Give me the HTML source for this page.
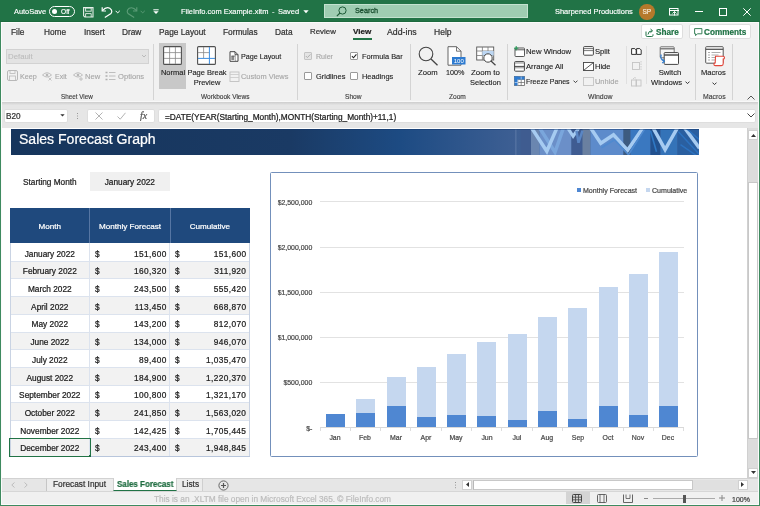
<!DOCTYPE html>
<html><head><meta charset="utf-8">
<style>
*{box-sizing:border-box;margin:0;padding:0}
html,body{width:760px;height:506px;overflow:hidden;background:#fff;-webkit-font-smoothing:antialiased;font-family:"Liberation Sans",sans-serif;color:#262626}
.a{position:absolute;white-space:nowrap;will-change:transform;-webkit-text-stroke-width:0.22px}
#title{position:absolute;left:0;top:0;width:760px;height:22px;background:#217346}
#ribbon{position:absolute;left:1px;top:22px;width:758px;height:80px;background:#f1f1f1}
#fbar{position:absolute;left:1px;top:102px;width:758px;height:26px;background:#e6e6e6}
#sheet{position:absolute;left:1px;top:128px;width:746px;height:350px;background:#fff}
.t{font-size:8.3px;color:#333;line-height:10px}
.w{color:#fff;-webkit-text-stroke:0.15px #fff}
.sep{position:absolute;width:1px;background:#d4d4d4}
.a.gl{font-size:7.2px;color:#3a3a3a;line-height:9px;-webkit-text-stroke-width:0.12px}
.a.rb{font-size:7.8px;color:#222;line-height:10px;-webkit-text-stroke-width:0.12px}
.a.dis{color:#a6a6a6}
</style></head><body>
<!-- TITLE BAR -->
<div id="title"></div>
<div id="ribbon"></div>
<div id="fbar"></div>
<div id="sheet"></div>
<div class="a t w" style="left:14px;top:7px;font-size:7.4px">AutoSave</div>
<div class="a" style="left:49px;top:6px;width:25.5px;height:11px;border:1.3px solid #fff;border-radius:5.5px"></div>
<div class="a" style="left:52px;top:9px;width:5px;height:5px;background:#fff;border-radius:50%"></div>
<div class="a w" style="left:61px;top:7px;font-size:6.6px;line-height:9px">Off</div>

<div class="a w" style="left:181px;top:7px;font-size:7.46px;line-height:10px">FileInfo.com Example.xltm</div>
<div class="a w" style="left:272.2px;top:7px;font-size:7.46px;line-height:10px">-</div>
<div class="a w" style="left:278.1px;top:7px;font-size:7.46px;line-height:10px">Saved</div>

<div class="a" style="left:324px;top:4px;width:203.5px;height:14px;background:#9fcdb2;border:1px solid #c3e2cf"></div>
<div class="a" style="left:355.2px;top:6.3px;font-size:7.3px;line-height:10px;color:#1a4f30;-webkit-text-stroke-width:0.3px">Search</div>

<div class="a w" style="left:554.5px;top:7px;font-size:7.45px;line-height:10px;-webkit-text-stroke:0.15px #fff">Sharpened Productions</div>
<div class="a" style="left:638.6px;top:3.8px;width:15.5px;height:15.5px;border-radius:50%;background:#b5792b"></div>
<div class="a" style="left:638.6px;top:7.5px;font-size:6.5px;line-height:8px;width:15.5px;text-align:center;color:#f3e6d0">SP</div>


<svg class="a" style="left:83px;top:7px" width="11" height="11"><path d="M0.6 0.6h9.4v9.4h-8.2l-1.2-1.2z" fill="none" stroke="#e6efe9" stroke-width="1.1"/><rect x="2.6" y="1" width="5.6" height="3.2" fill="none" stroke="#e6efe9" stroke-width="0.9"/><path d="M2.6 10v-3.4h5.6v3.4" fill="none" stroke="#e6efe9" stroke-width="0.9"/></svg>
<svg class="a" style="left:101px;top:6px" width="12" height="12"><path d="M1.2 1.2 V5 H5" fill="none" stroke="#fff" stroke-width="1.2"/><path d="M1.5 4.6 Q5 0.5 8.8 2.2 Q12 4.5 10 7.5 L3.8 11.5" fill="none" stroke="#fff" stroke-width="1.2"/></svg>
<svg class="a" style="left:115px;top:9.5px" width="6" height="4"><path d="M0.6 0.8 L2.7 2.9 L4.8 0.8" stroke="#fff" fill="none" stroke-width="1"/></svg>
<svg class="a" style="left:126px;top:6px" width="12" height="12"><path d="M10.8 1.2 V5 H7" fill="none" stroke="#5d9d78" stroke-width="1.1"/><path d="M10.5 4.6 Q7 0.5 3.2 2.2 Q0 4.5 2 7.5 L8.2 11.5" fill="none" stroke="#5d9d78" stroke-width="1.1"/></svg>
<svg class="a" style="left:139.5px;top:9.5px" width="6" height="4"><path d="M0.6 0.8 L2.7 2.9 L4.8 0.8" stroke="#5d9d78" fill="none" stroke-width="0.9"/></svg>
<svg class="a" style="left:153px;top:9px" width="6" height="6"><path d="M0.3 0.8h5.4" stroke="#fff" stroke-width="1"/><path d="M0.3 2.3 L3 5 L5.7 2.3z" fill="#fff"/></svg>
<svg class="a" style="left:302.5px;top:9.5px" width="6" height="4"><path d="M0.3 0.3 L3 3.2 L5.7 0.3z" fill="#fff"/></svg>
<svg class="a" style="left:336px;top:6px" width="11" height="11"><circle cx="6.5" cy="4.5" r="3.6" fill="none" stroke="#1d5a37" stroke-width="1"/><path d="M4 7 L0.8 10.2" stroke="#1d5a37" stroke-width="1.1"/></svg>
<svg class="a" style="left:669px;top:8px" width="9.5" height="7.5"><rect x="0.5" y="0.5" width="8.5" height="6.5" fill="none" stroke="#fff" stroke-width="1"/><path d="M0.5 2.5h10" stroke="#fff" stroke-width="1"/><path d="M5.5 3.5v4M3.5 5.5 L5.5 3.5 L7.5 5.5" stroke="#fff" fill="none" stroke-width="0.9"/></svg>
<div class="a" style="left:694.5px;top:11px;width:7.5px;height:1px;background:#fff"></div>
<div class="a" style="left:719px;top:7.5px;width:7.5px;height:7.5px;border:1px solid #fff"></div>
<svg class="a" style="left:743px;top:7.5px" width="8" height="8"><path d="M0.3 0.3 L7.7 7.7 M7.7 0.3 L0.3 7.7" stroke="#fff" stroke-width="1"/></svg>

<!-- Share / Comments -->
<div class="a" style="left:641.3px;top:24.4px;width:41.7px;height:15.1px;background:#fff;border:1px solid #dedede;border-radius:2px"></div>
<svg class="a" style="left:645.3px;top:27.5px" width="9" height="9"><path d="M1 3.5v3.8q0 1.2 1.2 1.2h4.6q1.2 0 1.2-1.2v-1" fill="none" stroke="#217346" stroke-width="1"/><path d="M3 6.5 Q3.2 3 7 2.8 M5.5 1 L7.6 2.8 L5.5 4.6" fill="none" stroke="#217346" stroke-width="1"/></svg>
<div class="a" style="left:656px;top:27.5px;font-size:8.2px;line-height:10px;font-weight:bold;color:#217346">Share</div>
<div class="a" style="left:689px;top:24.4px;width:62px;height:15.1px;background:#fff;border:1px solid #dedede;border-radius:2px"></div>
<svg class="a" style="left:694px;top:28px" width="9" height="9"><path d="M0.6 0.6h7.3v5.2h-4.5l-1.8 1.8v-1.8h-1z" fill="none" stroke="#217346" stroke-width="0.9"/></svg>
<div class="a" style="left:704px;top:27.5px;font-size:8.2px;line-height:10px;font-weight:bold;color:#217346">Comments</div>

<!-- RIBBON -->
<div class="a t" style="left:11px;top:27px">File</div>
<div class="a t" style="left:44px;top:27px">Home</div>
<div class="a t" style="left:84px;top:27px">Insert</div>
<div class="a t" style="left:122px;top:27px">Draw</div>
<div class="a t" style="left:159px;top:27px">Page Layout</div>
<div class="a t" style="left:223px;top:27px">Formulas</div>
<div class="a t" style="left:274.5px;top:27px">Data</div>
<div class="a t" style="left:309.7px;top:27px;font-size:7.9px">Review</div>
<div class="a t" style="left:352.6px;top:27px;font-weight:bold;color:#222;font-size:8.1px">View</div>
<div class="a" style="left:352.6px;top:37.5px;width:18.5px;height:1.6px;background:#217346"></div>
<div class="a t" style="left:387.4px;top:27px;font-size:8.76px">Add-ins</div>
<div class="a t" style="left:434.2px;top:27px;font-size:8.55px">Help</div>


<!-- Sheet View group -->
<div class="a" style="left:5.5px;top:48.5px;width:143px;height:14.5px;background:#e3e3e3;border:1px solid #d2d2d2"></div>
<div class="a rb dis" style="left:7.5px;top:51.5px;font-size:7.8px;color:#bcbcbc">Default</div>
<svg class="a" style="left:141px;top:54px" width="6" height="4"><path d="M1 1 L3 3 L5 1" stroke="#b0b0b0" fill="none" stroke-width="0.8"/></svg>
<svg class="a" style="left:7px;top:70px" width="11" height="11"><rect x="0.5" y="0.5" width="10" height="10" rx="1.5" fill="none" stroke="#b8b8b8"/><rect x="3" y="0.5" width="5" height="3" fill="none" stroke="#b8b8b8" stroke-width="0.8"/><rect x="2.5" y="6" width="6" height="4.5" fill="none" stroke="#b8b8b8" stroke-width="0.8"/></svg>
<div class="a rb dis" style="left:20px;top:72px;font-size:7.2px">Keep</div>
<svg class="a" style="left:42px;top:71px" width="11" height="10"><path d="M0.5 4 Q5 -0.5 9.5 4 Q5 8 0.5 4Z" fill="none" stroke="#b8b8b8" stroke-width="0.9"/><circle cx="5" cy="4" r="1.3" fill="#b8b8b8"/><path d="M6.5 6.5 L9.5 9.5 M9.5 6.5 L6.5 9.5" stroke="#b8b8b8" stroke-width="0.8"/></svg>
<div class="a rb dis" style="left:54.7px;top:72px;font-size:7.0px">Exit</div>
<svg class="a" style="left:72.5px;top:71px" width="11" height="10"><path d="M0.5 4 Q5 -0.5 9.5 4 Q5 8 0.5 4Z" fill="none" stroke="#b8b8b8" stroke-width="0.9"/><circle cx="5" cy="4" r="1.3" fill="#b8b8b8"/><path d="M8 6 L8 10 M6 8 L10 8" stroke="#b8b8b8" stroke-width="0.8"/></svg>
<div class="a rb dis" style="left:84.8px;top:72px;font-size:7.6px">New</div>
<svg class="a" style="left:105px;top:71px" width="11" height="10"><path d="M0.5 1.5h2M0.5 5h2M0.5 8.5h2" stroke="#b0b0b0" stroke-width="1.6"/><path d="M4 1.5h6.5M4 5h6.5M4 8.5h6.5" stroke="#b8b8b8" stroke-width="0.9"/></svg>
<div class="a rb dis" style="left:118px;top:72px;font-size:7.6px">Options</div>
<div class="a gl" style="left:61px;top:92px;font-size:6.3px">Sheet View</div>
<div class="sep" style="left:153px;top:44px;height:56px"></div>

<!-- Workbook Views -->
<div class="a" style="left:159px;top:43.3px;width:27.2px;height:45.6px;background:#c8c8c8"></div>
<svg class="a" style="left:163px;top:46px" width="19" height="19"><rect x="0.6" y="0.6" width="17.8" height="17.8" rx="1" fill="#fff" stroke="#505050" stroke-width="1.1"/><path d="M6.6 1v17M12.4 1v17M1 6.6h17M1 12.4h17" stroke="#888" stroke-width="0.8"/></svg>
<div class="a rb" style="left:159.5px;top:67.5px;font-size:7.5px;width:26px;text-align:center;color:#222">Normal</div>
<svg class="a" style="left:197px;top:46px" width="19" height="19"><rect x="0.6" y="0.6" width="17.8" height="17.8" rx="1" fill="#fff" stroke="#505050" stroke-width="1.1"/><path d="M6.6 1v11M1 6.6h11" stroke="#888" stroke-width="0.8"/><path d="M12.4 1v17M1 12.4h17" stroke="#3c8de0" stroke-width="1"/></svg>
<div class="a rb" style="left:187px;top:67.5px;font-size:7.5px;width:40px;text-align:center">Page Break</div>
<div class="a rb" style="left:187px;top:77.5px;font-size:7.5px;width:40px;text-align:center">Preview</div>
<svg class="a" style="left:229px;top:50.5px" width="10" height="11"><path d="M1 0.7h5l3 3v6.6h-8z" fill="#fff" stroke="#444" stroke-width="1"/><path d="M6 0.7v3h3" fill="none" stroke="#444" stroke-width="0.9"/><rect x="2.3" y="5" width="3" height="4" fill="#888"/><path d="M2.5 5h4.5M6 7h1M6 9h1" stroke="#555" stroke-width="0.8"/></svg>
<div class="a rb" style="left:240.5px;top:52px;font-size:7.2px">Page Layout</div>
<svg class="a" style="left:228.5px;top:70.5px" width="11" height="11"><rect x="1" y="1" width="9" height="9.5" fill="none" stroke="#c0c0c0" stroke-width="0.9"/><path d="M1 3.5h9M1 6.5h9" stroke="#c8c8c8" stroke-width="0.8"/></svg>
<div class="a rb dis" style="left:240.5px;top:72px;font-size:7.45px">Custom Views</div>
<div class="a gl" style="left:200.7px;top:92px;font-size:6.56px">Workbook Views</div>
<div class="sep" style="left:296.5px;top:44px;height:56px"></div>

<!-- Show -->
<div class="a" style="left:304px;top:52.3px;width:8px;height:8px;border:1px solid #c4c4c4;background:#e4e4e4;border-radius:1px"></div>
<svg class="a" style="left:304px;top:52.3px" width="8" height="8"><path d="M1.8 4 L3.4 5.6 L6.4 2.4" stroke="#b0b0b0" fill="none" stroke-width="1"/></svg>
<div class="a rb dis" style="left:316px;top:52px;font-size:7.1px">Ruler</div>
<div class="a" style="left:350px;top:52.3px;width:8.2px;height:8.2px;border:1px solid #9a9a9a;background:#fff;border-radius:1px"></div>
<svg class="a" style="left:350px;top:52.3px" width="8" height="8"><path d="M1.9 4.2 L3.5 5.8 L6.4 2.4" stroke="#222" fill="none" stroke-width="1.1"/></svg>
<div class="a rb" style="left:361.6px;top:52px;font-size:7.4px">Formula Bar</div>
<div class="a" style="left:304px;top:72.2px;width:8.2px;height:8.2px;border:1px solid #9a9a9a;background:#fff;border-radius:1px"></div>
<div class="a rb" style="left:315.8px;top:72px;font-size:7.45px">Gridlines</div>
<div class="a" style="left:350px;top:72.2px;width:8.2px;height:8.2px;border:1px solid #9a9a9a;background:#fff;border-radius:1px"></div>
<div class="a rb" style="left:361.6px;top:72px;font-size:7.4px">Headings</div>
<div class="a gl" style="left:345px;top:92px;font-size:6.6px">Show</div>
<div class="sep" style="left:410px;top:44px;height:56px"></div>

<!-- Zoom -->
<svg class="a" style="left:418px;top:45.5px" width="21" height="20"><circle cx="8" cy="8" r="6.8" fill="none" stroke="#444" stroke-width="1.1"/><path d="M13 13 L19.5 19.3" stroke="#444" stroke-width="1.3"/></svg>
<div class="a rb" style="left:418px;top:67.5px;font-size:7.7px">Zoom</div>
<svg class="a" style="left:447px;top:45.5px" width="19" height="20"><path d="M1 0.7h8.5l4.5 4.5v14h-13z" fill="#fff" stroke="#555" stroke-width="0.9"/><path d="M9.5 0.7v4.5h4.5" fill="none" stroke="#555" stroke-width="0.8"/><rect x="5" y="11" width="13.5" height="7.5" fill="#2e7bd0"/><text x="11.75" y="17.3" font-size="6" fill="#fff" text-anchor="middle" font-family="Liberation Sans">100</text></svg>
<div class="a rb" style="left:446px;top:67.5px;font-size:7.2px">100%</div>
<svg class="a" style="left:475.5px;top:45.5px" width="21" height="20"><rect x="0.7" y="1" width="17" height="13" fill="#fff" stroke="#555" stroke-width="0.9"/><path d="M0.7 5h17M0.7 9.5h17M6.4 1v13M12 1v13" stroke="#777" stroke-width="0.8"/><rect x="6.4" y="5" width="11.3" height="4.5" fill="#bcd6f2"/><circle cx="12" cy="12" r="4.2" fill="#fff" stroke="#444" stroke-width="1"/><path d="M15 15 L19.5 19.3" stroke="#444" stroke-width="1.2"/></svg>
<div class="a rb" style="left:470.5px;top:67.5px;font-size:7.9px">Zoom to</div>
<div class="a rb" style="left:469.7px;top:77.5px;font-size:7.5px">Selection</div>
<div class="a gl" style="left:449px;top:92px;font-size:6.6px">Zoom</div>
<div class="sep" style="left:507px;top:44px;height:56px"></div>

<!-- Window -->
<svg class="a" style="left:513.5px;top:45.5px" width="11" height="11"><rect x="1" y="2" width="9.5" height="8.5" rx="0.8" fill="#fff" stroke="#444" stroke-width="0.9"/><path d="M1 3.8h9.5" stroke="#444" stroke-width="0.9"/><path d="M2.2 0v4.4M0 2.2h4.4" stroke="#1f9a55" stroke-width="1"/></svg>
<div class="a rb" style="left:526.3px;top:46.5px;font-size:7.76px">New Window</div>
<svg class="a" style="left:513.5px;top:60.5px" width="11" height="11"><rect x="0.6" y="0.6" width="9.8" height="9.6" rx="0.8" fill="#fff" stroke="#444" stroke-width="1"/><path d="M0.6 5.4h9.8" stroke="#444" stroke-width="1"/><path d="M0.6 2h9.8M0.6 6.8h9.8" stroke="#666" stroke-width="0.7"/></svg>
<div class="a rb" style="left:526.3px;top:61.5px;font-size:7.65px">Arrange All</div>
<svg class="a" style="left:513.5px;top:75.8px" width="11" height="10"><rect x="0.5" y="0.5" width="10" height="9" fill="#fff" stroke="#666" stroke-width="0.8"/><path d="M0.5 3.5h10M0.5 6.5h10M3.8 0.5v9M7.2 0.5v9" stroke="#666" stroke-width="0.7"/><rect x="0.5" y="0.5" width="10" height="3" fill="#2e7bd0"/><rect x="0.5" y="0.5" width="3.3" height="9" fill="#2e7bd0"/><path d="M3.8 3.5v6M0.5 6.5h3.3M7.2 0.5v3" stroke="#fff" stroke-width="0.5"/></svg>
<div class="a rb" style="left:526.3px;top:76.5px;font-size:7.0px">Freeze Panes</div>
<svg class="a" style="left:572.5px;top:80.3px" width="5" height="3.5"><path d="M0.5 0.6 L2.5 2.6 L4.5 0.6" stroke="#444" fill="none" stroke-width="1"/></svg>
<svg class="a" style="left:582.8px;top:46.3px" width="11" height="10"><rect x="0.6" y="0.6" width="9.8" height="8.6" rx="0.8" fill="#fff" stroke="#444" stroke-width="1"/><path d="M0.6 2.6h9.8M0.6 4.6h9.8" stroke="#555" stroke-width="0.8"/></svg>
<div class="a rb" style="left:595.4px;top:46.5px;font-size:7.66px">Split</div>
<svg class="a" style="left:582.5px;top:61.5px" width="11" height="9"><rect x="0.5" y="0.5" width="10" height="8" fill="#fff" stroke="#444" stroke-width="0.9"/><path d="M0.5 8.5 L10.5 0.5" stroke="#444" stroke-width="0.9"/></svg>
<div class="a rb" style="left:595.4px;top:61.5px;font-size:7.5px">Hide</div>
<svg class="a" style="left:582.5px;top:77px" width="11" height="9"><rect x="0.5" y="0.5" width="10" height="8" fill="none" stroke="#c4c4c4" stroke-width="0.9"/></svg>
<div class="a rb dis" style="left:595.4px;top:77px;font-size:7.45px">Unhide</div>
<div class="sep" style="left:626px;top:46px;height:38px;background:#e0e0e0"></div>
<svg class="a" style="left:631px;top:47.5px" width="11" height="7"><path d="M0.6 0.6h3.2l1.4 1.4v4.4h-4.6z M5.6 0.6h3.2l1.4 1.4v4.4h-4.6z" fill="#fff" stroke="#333" stroke-width="1"/></svg>
<svg class="a" style="left:631px;top:61px" width="11" height="10"><rect x="1.5" y="1.5" width="7" height="7" fill="none" stroke="#c4c4c4" stroke-width="0.9"/><path d="M10 0v10" stroke="#c4c4c4" stroke-width="0.8" stroke-dasharray="1.5 1"/></svg>
<svg class="a" style="left:631px;top:77px" width="11" height="10"><rect x="0.5" y="3" width="5" height="6" fill="none" stroke="#c4c4c4" stroke-width="0.9"/><rect x="5" y="3" width="5" height="6" fill="none" stroke="#c4c4c4" stroke-width="0.9"/><path d="M2 2 Q3 0 5 1" stroke="#c4c4c4" fill="none" stroke-width="0.8"/></svg>
<div class="sep" style="left:646px;top:46px;height:38px;background:#e0e0e0"></div>
<svg class="a" style="left:659px;top:45.5px" width="21" height="20"><rect x="1.2" y="0.8" width="14" height="11" rx="0.8" fill="#f6f6f6" stroke="#666" stroke-width="0.9"/><path d="M1.2 2.8h14" stroke="#666" stroke-width="1.2"/><rect x="5.2" y="6.6" width="14.3" height="11.8" rx="0.8" fill="#fff" stroke="#444" stroke-width="1"/><path d="M5.2 9h14.3" stroke="#444" stroke-width="1.4"/><path d="M2.2 8.5 Q0.8 13.5 5.2 15.3" fill="none" stroke="#2e7bd0" stroke-width="1.2"/><path d="M3.6 13.2 L5.4 15.4 L3.2 17" fill="none" stroke="#2e7bd0" stroke-width="1.1"/></svg>
<div class="a rb" style="left:655px;top:67.5px;font-size:7.7px;width:30px;text-align:center">Switch</div>
<div class="a rb" style="left:650.6px;top:77.5px;font-size:7.7px">Windows</div>
<svg class="a" style="left:684.5px;top:80.8px" width="5" height="3.5"><path d="M0.5 0.6 L2.5 2.6 L4.5 0.6" stroke="#333" fill="none" stroke-width="1"/></svg>
<div class="a gl" style="left:588.3px;top:92px;font-size:6.9px">Window</div>
<div class="sep" style="left:695px;top:44px;height:56px"></div>

<!-- Macros -->
<svg class="a" style="left:704.5px;top:45.8px" width="21" height="21"><rect x="0.7" y="0.7" width="17.5" height="16.5" rx="0.8" fill="#fff" stroke="#555" stroke-width="1"/><path d="M0.7 3.3h17.5" stroke="#555" stroke-width="1.3"/><path d="M3 6.5h2M3 9h2M3 11.5h2M3 14h2M6.5 6.5h9M6.5 9h7M6.5 11.5h5M6.5 14h4" stroke="#999" stroke-width="0.8"/><path d="M10.5 10.3 h7.5 q1.5 0 1.5 1.4 q0 1.3 -1.3 1.3 v4.8 q0 1.8 -1.8 1.8 h-6 q-1.5 0 -1.5 -1.4 q0 -1.3 1.3 -1.3z" fill="#fff" stroke="#e2463a" stroke-width="1.1"/></svg>
<div class="a rb" style="left:701.3px;top:67.5px;font-size:7.6px">Macros</div>
<svg class="a" style="left:711.5px;top:81.5px" width="5" height="3.5"><path d="M0.5 0.6 L2.5 2.6 L4.5 0.6" stroke="#333" fill="none" stroke-width="1"/></svg>
<div class="a gl" style="left:702.7px;top:92px;font-size:6.9px">Macros</div>
<div class="sep" style="left:731.5px;top:44px;height:56px"></div>
<svg class="a" style="left:747px;top:95px" width="8" height="5"><path d="M0.5 4.5 L4 1 L7.5 4.5" stroke="#555" fill="none" stroke-width="1"/></svg>

<!-- FORMULA BAR -->


<div class="a" style="left:1px;top:100.6px;width:758px;height:1px;background:#f8f8f8"></div>
<div class="a" style="left:1px;top:101.6px;width:758px;height:2.6px;background:linear-gradient(#cdcdcd,#e4e4e4)"></div>
<div class="a" style="left:4px;top:108.6px;width:63.5px;height:14px;background:#fff;border:1px solid #dedede;border-radius:2px"></div>
<div class="a" style="left:6.3px;top:111.5px;font-size:8.2px;line-height:10px;color:#333">B20</div>
<svg class="a" style="left:60.2px;top:114.3px" width="5" height="3"><path d="M0.3 0.3 L2.5 2.6 L4.7 0.3z" fill="#333"/></svg>
<div class="a" style="left:77px;top:113px;width:1px;height:1px;background:#999;box-shadow:0 2.5px 0 #999,0 5px 0 #999"></div>
<div class="a" style="left:86.6px;top:108.6px;width:68.4px;height:14px;background:#fff;border:1px solid #dedede;border-radius:2px"></div>
<svg class="a" style="left:95px;top:111.5px" width="8" height="8"><path d="M0.5 0.5 L7.5 7.5 M7.5 0.5 L0.5 7.5" stroke="#a0a0a0" stroke-width="0.8"/></svg>
<svg class="a" style="left:117px;top:111.5px" width="9" height="8"><path d="M0.5 4.5 L3.2 7.2 L8.5 0.8" stroke="#a0a0a0" fill="none" stroke-width="0.8"/></svg>
<div class="a" style="left:140px;top:110px;font-family:'Liberation Serif',serif;font-style:italic;font-size:10px;line-height:11px;color:#555">fx</div>
<div class="a" style="left:158px;top:108.6px;width:598px;height:14px;background:#fff;border:1px solid #dedede;border-radius:2px"></div>
<div class="a" style="left:165px;top:112.10px;font-size:8.3px;line-height:10px;color:#1a1a1a">=DATE(YEAR(Starting_Month),MONTH(Starting_Month)+11,1)</div>
<svg class="a" style="left:747px;top:113px" width="8" height="5"><path d="M0.5 0.5 L4 4 L7.5 0.5" stroke="#444" fill="none" stroke-width="1"/></svg>

<!-- SHEET -->

<svg class="a" style="left:10.5px;top:129.3px" width="687.5" height="26" viewBox="10.5 129.3 687.5 26">
<defs>
<linearGradient id="bg1" gradientUnits="userSpaceOnUse" x1="10.5" x2="698.5" y1="0" y2="0">
<stop offset="0" stop-color="#16355c"/>
<stop offset="0.406" stop-color="#1a3a64"/>
<stop offset="0.566" stop-color="#1d4b83"/>
<stop offset="0.741" stop-color="#3f6094"/>
<stop offset="1" stop-color="#3f6094"/>
</linearGradient>
<clipPath id="bc"><rect x="10.5" y="129.3" width="688" height="26"/></clipPath>
</defs>
<g clip-path="url(#bc)">
<rect x="10.5" y="129.3" width="688" height="26" fill="url(#bg1)"/>
<rect x="515" y="129.3" width="0.8" height="26" fill="#6580ad"/>
<rect x="520" y="129.3" width="10.5" height="26" fill="#3f5c90"/>
<rect x="530.5" y="129.3" width="8.5" height="26" fill="#6a86b0"/>
<rect x="539" y="129.3" width="32" height="26" fill="#6b8fc8"/>
<rect x="571" y="129.3" width="11" height="26" fill="#3f5c92"/>
<rect x="582" y="129.3" width="8" height="26" fill="#6a80a0"/>
<rect x="590" y="129.3" width="33" height="26" fill="#5d8bcb"/>
<rect x="623" y="129.3" width="7" height="26" fill="#3d5b80"/>
<rect x="630" y="129.3" width="20" height="26" fill="#3a78c0"/>
<rect x="650" y="129.3" width="10" height="26" fill="#22518f"/>
<rect x="660" y="129.3" width="17" height="26" fill="#3473b8"/>
<rect x="677" y="129.3" width="21.5" height="26" fill="#2a5fa0"/>
<path d="M539 128 L554.5 152.5 L563 128" fill="none" stroke="#7aa6dc" stroke-width="3.5"/>
<path d="M531 128 L546.3 151.5 L556.5 128" fill="none" stroke="#a6cbf1" stroke-width="3.5"/>
<path d="M567 128 L572.6 136.5 L578.5 128" fill="none" stroke="#a6cbf1" stroke-width="3"/>
<path d="M576 131 L578 143 L582 131" fill="none" stroke="#5a86c4" stroke-width="2.5"/>
<path d="M590 128 L600.3 143.5 L613 135 L627.1 150.5 L642.5 128" fill="none" stroke="#a6cbf1" stroke-width="3.5"/>
<path d="M601 148 L614 140 L628 155 L645 128" fill="none" stroke="#4f8ad0" stroke-width="1.6"/>
<path d="M652.5 128 L664.6 150 L677 128" fill="none" stroke="#a6cbf1" stroke-width="3.5"/>
<path d="M650 131 L656 152" fill="none" stroke="#2f78c4" stroke-width="1.6"/>
<path d="M684 128 L699 148.5" fill="none" stroke="#a6cbf1" stroke-width="3.5"/>
<path d="M678 132 L699 155 M680 145 L699 158 M686 129 L699 140" fill="none" stroke="#2c72c0" stroke-width="1.4"/>
<rect x="10.5" y="129.3" width="688" height="0.8" fill="#17386a" opacity="0.6"/>
</g>
</svg>
<div class="a" style="left:19px;top:131px;font-size:14.06px;line-height:17px;color:#fff">Sales Forecast Graph</div>

<div class="a" style="left:23.3px;top:177.60px;font-size:8.26px;line-height:10px;color:#222">Starting Month</div>
<div class="a" style="left:90.3px;top:172px;width:79.7px;height:18.7px;background:#f0f0f0"></div>
<div class="a" style="left:90.3px;top:176.6px;width:79.7px;text-align:center;font-size:8.3px;line-height:10px;color:#1a1a1a">January 2022</div>
<div class="a" style="left:10.3px;top:207.9px;width:239.5px;height:35.1px;background:#1f497d"></div>
<div class="a" style="left:89.4px;top:207.9px;width:1px;height:35.1px;background:#5676a3"></div>
<div class="a" style="left:169.5px;top:207.9px;width:1px;height:35.1px;background:#5676a3"></div>
<div class="a" style="left:10.3px;top:221.70px;width:79.6px;text-align:center;font-size:8.1px;line-height:10px;color:#fff">Month</div>
<div class="a" style="left:89.9px;top:221.70px;width:80.1px;text-align:center;font-size:8.1px;line-height:10px;color:#fff">Monthly Forecast</div>
<div class="a" style="left:170px;top:221.70px;width:79.8px;text-align:center;font-size:8.1px;line-height:10px;color:#fff">Cumulative</div>
<div class="a" style="left:10.3px;top:243.45px;width:239.5px;height:17.72px;background:#ffffff"></div>
<div class="a" style="left:10.3px;top:248.51px;width:79.6px;text-align:center;font-size:8.3px;line-height:10px;color:#1a1a1a">January 2022</div>
<div class="a" style="left:94.8px;top:248.51px;font-size:8.3px;line-height:10px;color:#1a1a1a">$</div>
<div class="a" style="left:100.0px;top:248.51px;width:66.68px;text-align:right;font-size:8.3px;letter-spacing:0.38px;line-height:10px;color:#1a1a1a">151,600</div>
<div class="a" style="left:175.0px;top:248.51px;font-size:8.3px;line-height:10px;color:#1a1a1a">$</div>
<div class="a" style="left:180.0px;top:248.51px;width:66.38px;text-align:right;font-size:8.3px;letter-spacing:0.38px;line-height:10px;color:#1a1a1a">151,600</div>
<div class="a" style="left:10.3px;top:261.17px;width:239.5px;height:17.72px;background:#f2f2f2"></div>
<div class="a" style="left:10.3px;top:266.23px;width:79.6px;text-align:center;font-size:8.3px;line-height:10px;color:#1a1a1a">February 2022</div>
<div class="a" style="left:94.8px;top:266.23px;font-size:8.3px;line-height:10px;color:#1a1a1a">$</div>
<div class="a" style="left:100.0px;top:266.23px;width:66.68px;text-align:right;font-size:8.3px;letter-spacing:0.38px;line-height:10px;color:#1a1a1a">160,320</div>
<div class="a" style="left:175.0px;top:266.23px;font-size:8.3px;line-height:10px;color:#1a1a1a">$</div>
<div class="a" style="left:180.0px;top:266.23px;width:66.38px;text-align:right;font-size:8.3px;letter-spacing:0.38px;line-height:10px;color:#1a1a1a">311,920</div>
<div class="a" style="left:10.3px;top:278.89px;width:239.5px;height:17.72px;background:#ffffff"></div>
<div class="a" style="left:10.3px;top:283.95px;width:79.6px;text-align:center;font-size:8.3px;line-height:10px;color:#1a1a1a">March 2022</div>
<div class="a" style="left:94.8px;top:283.95px;font-size:8.3px;line-height:10px;color:#1a1a1a">$</div>
<div class="a" style="left:100.0px;top:283.95px;width:66.68px;text-align:right;font-size:8.3px;letter-spacing:0.38px;line-height:10px;color:#1a1a1a">243,500</div>
<div class="a" style="left:175.0px;top:283.95px;font-size:8.3px;line-height:10px;color:#1a1a1a">$</div>
<div class="a" style="left:180.0px;top:283.95px;width:66.38px;text-align:right;font-size:8.3px;letter-spacing:0.38px;line-height:10px;color:#1a1a1a">555,420</div>
<div class="a" style="left:10.3px;top:296.61px;width:239.5px;height:17.72px;background:#f2f2f2"></div>
<div class="a" style="left:10.3px;top:301.67px;width:79.6px;text-align:center;font-size:8.3px;line-height:10px;color:#1a1a1a">April 2022</div>
<div class="a" style="left:94.8px;top:301.67px;font-size:8.3px;line-height:10px;color:#1a1a1a">$</div>
<div class="a" style="left:100.0px;top:301.67px;width:66.68px;text-align:right;font-size:8.3px;letter-spacing:0.38px;line-height:10px;color:#1a1a1a">113,450</div>
<div class="a" style="left:175.0px;top:301.67px;font-size:8.3px;line-height:10px;color:#1a1a1a">$</div>
<div class="a" style="left:180.0px;top:301.67px;width:66.38px;text-align:right;font-size:8.3px;letter-spacing:0.38px;line-height:10px;color:#1a1a1a">668,870</div>
<div class="a" style="left:10.3px;top:314.33px;width:239.5px;height:17.72px;background:#ffffff"></div>
<div class="a" style="left:10.3px;top:319.39px;width:79.6px;text-align:center;font-size:8.3px;line-height:10px;color:#1a1a1a">May 2022</div>
<div class="a" style="left:94.8px;top:319.39px;font-size:8.3px;line-height:10px;color:#1a1a1a">$</div>
<div class="a" style="left:100.0px;top:319.39px;width:66.68px;text-align:right;font-size:8.3px;letter-spacing:0.38px;line-height:10px;color:#1a1a1a">143,200</div>
<div class="a" style="left:175.0px;top:319.39px;font-size:8.3px;line-height:10px;color:#1a1a1a">$</div>
<div class="a" style="left:180.0px;top:319.39px;width:66.38px;text-align:right;font-size:8.3px;letter-spacing:0.38px;line-height:10px;color:#1a1a1a">812,070</div>
<div class="a" style="left:10.3px;top:332.05px;width:239.5px;height:17.72px;background:#f2f2f2"></div>
<div class="a" style="left:10.3px;top:337.11px;width:79.6px;text-align:center;font-size:8.3px;line-height:10px;color:#1a1a1a">June 2022</div>
<div class="a" style="left:94.8px;top:337.11px;font-size:8.3px;line-height:10px;color:#1a1a1a">$</div>
<div class="a" style="left:100.0px;top:337.11px;width:66.68px;text-align:right;font-size:8.3px;letter-spacing:0.38px;line-height:10px;color:#1a1a1a">134,000</div>
<div class="a" style="left:175.0px;top:337.11px;font-size:8.3px;line-height:10px;color:#1a1a1a">$</div>
<div class="a" style="left:180.0px;top:337.11px;width:66.38px;text-align:right;font-size:8.3px;letter-spacing:0.38px;line-height:10px;color:#1a1a1a">946,070</div>
<div class="a" style="left:10.3px;top:349.77px;width:239.5px;height:17.72px;background:#ffffff"></div>
<div class="a" style="left:10.3px;top:354.83px;width:79.6px;text-align:center;font-size:8.3px;line-height:10px;color:#1a1a1a">July 2022</div>
<div class="a" style="left:94.8px;top:354.83px;font-size:8.3px;line-height:10px;color:#1a1a1a">$</div>
<div class="a" style="left:100.0px;top:354.83px;width:66.68px;text-align:right;font-size:8.3px;letter-spacing:0.38px;line-height:10px;color:#1a1a1a">89,400</div>
<div class="a" style="left:175.0px;top:354.83px;font-size:8.3px;line-height:10px;color:#1a1a1a">$</div>
<div class="a" style="left:180.0px;top:354.83px;width:66.38px;text-align:right;font-size:8.3px;letter-spacing:0.38px;line-height:10px;color:#1a1a1a">1,035,470</div>
<div class="a" style="left:10.3px;top:367.49px;width:239.5px;height:17.72px;background:#f2f2f2"></div>
<div class="a" style="left:10.3px;top:372.55px;width:79.6px;text-align:center;font-size:8.3px;line-height:10px;color:#1a1a1a">August 2022</div>
<div class="a" style="left:94.8px;top:372.55px;font-size:8.3px;line-height:10px;color:#1a1a1a">$</div>
<div class="a" style="left:100.0px;top:372.55px;width:66.68px;text-align:right;font-size:8.3px;letter-spacing:0.38px;line-height:10px;color:#1a1a1a">184,900</div>
<div class="a" style="left:175.0px;top:372.55px;font-size:8.3px;line-height:10px;color:#1a1a1a">$</div>
<div class="a" style="left:180.0px;top:372.55px;width:66.38px;text-align:right;font-size:8.3px;letter-spacing:0.38px;line-height:10px;color:#1a1a1a">1,220,370</div>
<div class="a" style="left:10.3px;top:385.21px;width:239.5px;height:17.72px;background:#ffffff"></div>
<div class="a" style="left:10.3px;top:390.27px;width:79.6px;text-align:center;font-size:8.3px;line-height:10px;color:#1a1a1a">September 2022</div>
<div class="a" style="left:94.8px;top:390.27px;font-size:8.3px;line-height:10px;color:#1a1a1a">$</div>
<div class="a" style="left:100.0px;top:390.27px;width:66.68px;text-align:right;font-size:8.3px;letter-spacing:0.38px;line-height:10px;color:#1a1a1a">100,800</div>
<div class="a" style="left:175.0px;top:390.27px;font-size:8.3px;line-height:10px;color:#1a1a1a">$</div>
<div class="a" style="left:180.0px;top:390.27px;width:66.38px;text-align:right;font-size:8.3px;letter-spacing:0.38px;line-height:10px;color:#1a1a1a">1,321,170</div>
<div class="a" style="left:10.3px;top:402.93px;width:239.5px;height:17.72px;background:#f2f2f2"></div>
<div class="a" style="left:10.3px;top:407.99px;width:79.6px;text-align:center;font-size:8.3px;line-height:10px;color:#1a1a1a">October 2022</div>
<div class="a" style="left:94.8px;top:407.99px;font-size:8.3px;line-height:10px;color:#1a1a1a">$</div>
<div class="a" style="left:100.0px;top:407.99px;width:66.68px;text-align:right;font-size:8.3px;letter-spacing:0.38px;line-height:10px;color:#1a1a1a">241,850</div>
<div class="a" style="left:175.0px;top:407.99px;font-size:8.3px;line-height:10px;color:#1a1a1a">$</div>
<div class="a" style="left:180.0px;top:407.99px;width:66.38px;text-align:right;font-size:8.3px;letter-spacing:0.38px;line-height:10px;color:#1a1a1a">1,563,020</div>
<div class="a" style="left:10.3px;top:420.65px;width:239.5px;height:17.72px;background:#ffffff"></div>
<div class="a" style="left:10.3px;top:425.71px;width:79.6px;text-align:center;font-size:8.3px;line-height:10px;color:#1a1a1a">November 2022</div>
<div class="a" style="left:94.8px;top:425.71px;font-size:8.3px;line-height:10px;color:#1a1a1a">$</div>
<div class="a" style="left:100.0px;top:425.71px;width:66.68px;text-align:right;font-size:8.3px;letter-spacing:0.38px;line-height:10px;color:#1a1a1a">142,425</div>
<div class="a" style="left:175.0px;top:425.71px;font-size:8.3px;line-height:10px;color:#1a1a1a">$</div>
<div class="a" style="left:180.0px;top:425.71px;width:66.38px;text-align:right;font-size:8.3px;letter-spacing:0.38px;line-height:10px;color:#1a1a1a">1,705,445</div>
<div class="a" style="left:10.3px;top:438.37px;width:239.5px;height:17.72px;background:#f2f2f2"></div>
<div class="a" style="left:10.3px;top:443.43px;width:79.6px;text-align:center;font-size:8.3px;line-height:10px;color:#1a1a1a">December 2022</div>
<div class="a" style="left:94.8px;top:443.43px;font-size:8.3px;line-height:10px;color:#1a1a1a">$</div>
<div class="a" style="left:100.0px;top:443.43px;width:66.68px;text-align:right;font-size:8.3px;letter-spacing:0.38px;line-height:10px;color:#1a1a1a">243,400</div>
<div class="a" style="left:175.0px;top:443.43px;font-size:8.3px;line-height:10px;color:#1a1a1a">$</div>
<div class="a" style="left:180.0px;top:443.43px;width:66.38px;text-align:right;font-size:8.3px;letter-spacing:0.38px;line-height:10px;color:#1a1a1a">1,948,845</div>
<div class="a" style="left:10.3px;top:260.67px;width:239.5px;height:1px;background:#dce3ee"></div>
<div class="a" style="left:10.3px;top:278.39px;width:239.5px;height:1px;background:#dce3ee"></div>
<div class="a" style="left:10.3px;top:296.11px;width:239.5px;height:1px;background:#dce3ee"></div>
<div class="a" style="left:10.3px;top:313.83px;width:239.5px;height:1px;background:#dce3ee"></div>
<div class="a" style="left:10.3px;top:331.55px;width:239.5px;height:1px;background:#dce3ee"></div>
<div class="a" style="left:10.3px;top:349.27px;width:239.5px;height:1px;background:#dce3ee"></div>
<div class="a" style="left:10.3px;top:366.99px;width:239.5px;height:1px;background:#dce3ee"></div>
<div class="a" style="left:10.3px;top:384.71px;width:239.5px;height:1px;background:#dce3ee"></div>
<div class="a" style="left:10.3px;top:402.43px;width:239.5px;height:1px;background:#dce3ee"></div>
<div class="a" style="left:10.3px;top:420.15px;width:239.5px;height:1px;background:#dce3ee"></div>
<div class="a" style="left:10.3px;top:437.87px;width:239.5px;height:1px;background:#dce3ee"></div>
<div class="a" style="left:10.3px;top:455.59px;width:239.5px;height:1px;background:#dce3ee"></div>
<div class="a" style="left:89.4px;top:243.45px;width:1px;height:212.64px;background:#dce3ee"></div>
<div class="a" style="left:169px;top:243.45px;width:1px;height:212.64px;background:#dce3ee"></div>
<div class="a" style="left:10.0px;top:243.45px;width:1px;height:212.64px;background:#c9d3e3"></div>
<div class="a" style="left:249.3px;top:243.45px;width:1px;height:212.64px;background:#c9d3e3"></div>
<div class="a" style="left:10.0px;top:455.59px;width:240px;height:1.2px;background:#b8c6dc"></div>
<div class="a" style="left:9.2px;top:437.5px;width:81.7px;height:19.3px;border:1.4px solid #217346"></div>
<div class="a" style="left:89.4px;top:454.9px;width:2.4px;height:2.4px;background:#1d6b3f"></div>
<div class="a" style="left:269.5px;top:172px;width:428px;height:284.6px;border:1.2px solid #7390bb;border-radius:1.5px;background:#fff"></div>
<div class="a" style="left:320px;top:201.45px;width:363.6px;height:1px;background:#e2e2e2"></div>
<div class="a" style="left:262px;top:197.95px;width:50.3px;text-align:right;font-size:6.93px;line-height:9px;color:#4a4a4a">$2,500,000</div>
<div class="a" style="left:320px;top:246.58px;width:363.6px;height:1px;background:#e2e2e2"></div>
<div class="a" style="left:262px;top:243.08px;width:50.3px;text-align:right;font-size:6.93px;line-height:9px;color:#4a4a4a">$2,000,000</div>
<div class="a" style="left:320px;top:291.71px;width:363.6px;height:1px;background:#e2e2e2"></div>
<div class="a" style="left:262px;top:288.21px;width:50.3px;text-align:right;font-size:6.93px;line-height:9px;color:#4a4a4a">$1,500,000</div>
<div class="a" style="left:320px;top:336.84px;width:363.6px;height:1px;background:#e2e2e2"></div>
<div class="a" style="left:262px;top:333.34px;width:50.3px;text-align:right;font-size:6.93px;line-height:9px;color:#4a4a4a">$1,000,000</div>
<div class="a" style="left:320px;top:381.97px;width:363.6px;height:1px;background:#e2e2e2"></div>
<div class="a" style="left:262px;top:378.47px;width:50.3px;text-align:right;font-size:6.93px;line-height:9px;color:#4a4a4a">$500,000</div>
<div class="a" style="left:320px;top:427.10px;width:363.6px;height:1px;background:#e2e2e2"></div>
<div class="a" style="left:262px;top:423.60px;width:50.3px;text-align:right;font-size:6.93px;line-height:9px;color:#4a4a4a">$-</div>
<div class="a" style="left:325.90px;top:413.92px;width:18.5px;height:13.68px;background:#c5d7ef"></div>
<div class="a" style="left:325.90px;top:413.92px;width:18.5px;height:13.68px;background:#4f87d2"></div>
<div class="a" style="left:320.15px;top:432.5px;width:30px;text-align:center;font-size:6.93px;line-height:9px;color:#4a4a4a">Jan</div>
<div class="a" style="left:356.20px;top:399.45px;width:18.5px;height:28.15px;background:#c5d7ef"></div>
<div class="a" style="left:356.20px;top:413.13px;width:18.5px;height:14.47px;background:#4f87d2"></div>
<div class="a" style="left:350.45px;top:432.5px;width:30px;text-align:center;font-size:6.93px;line-height:9px;color:#4a4a4a">Feb</div>
<div class="a" style="left:386.50px;top:377.47px;width:18.5px;height:50.13px;background:#c5d7ef"></div>
<div class="a" style="left:386.50px;top:405.62px;width:18.5px;height:21.98px;background:#4f87d2"></div>
<div class="a" style="left:380.75px;top:432.5px;width:30px;text-align:center;font-size:6.93px;line-height:9px;color:#4a4a4a">Mar</div>
<div class="a" style="left:416.80px;top:367.23px;width:18.5px;height:60.37px;background:#c5d7ef"></div>
<div class="a" style="left:416.80px;top:417.36px;width:18.5px;height:10.24px;background:#4f87d2"></div>
<div class="a" style="left:411.05px;top:432.5px;width:30px;text-align:center;font-size:6.93px;line-height:9px;color:#4a4a4a">Apr</div>
<div class="a" style="left:447.10px;top:354.30px;width:18.5px;height:73.30px;background:#c5d7ef"></div>
<div class="a" style="left:447.10px;top:414.67px;width:18.5px;height:12.93px;background:#4f87d2"></div>
<div class="a" style="left:441.35px;top:432.5px;width:30px;text-align:center;font-size:6.93px;line-height:9px;color:#4a4a4a">May</div>
<div class="a" style="left:477.40px;top:342.21px;width:18.5px;height:85.39px;background:#c5d7ef"></div>
<div class="a" style="left:477.40px;top:415.51px;width:18.5px;height:12.09px;background:#4f87d2"></div>
<div class="a" style="left:471.65px;top:432.5px;width:30px;text-align:center;font-size:6.93px;line-height:9px;color:#4a4a4a">Jun</div>
<div class="a" style="left:507.70px;top:334.14px;width:18.5px;height:93.46px;background:#c5d7ef"></div>
<div class="a" style="left:507.70px;top:419.53px;width:18.5px;height:8.07px;background:#4f87d2"></div>
<div class="a" style="left:501.95px;top:432.5px;width:30px;text-align:center;font-size:6.93px;line-height:9px;color:#4a4a4a">Jul</div>
<div class="a" style="left:538.00px;top:317.45px;width:18.5px;height:110.15px;background:#c5d7ef"></div>
<div class="a" style="left:538.00px;top:410.91px;width:18.5px;height:16.69px;background:#4f87d2"></div>
<div class="a" style="left:532.25px;top:432.5px;width:30px;text-align:center;font-size:6.93px;line-height:9px;color:#4a4a4a">Aug</div>
<div class="a" style="left:568.30px;top:308.35px;width:18.5px;height:119.25px;background:#c5d7ef"></div>
<div class="a" style="left:568.30px;top:418.50px;width:18.5px;height:9.10px;background:#4f87d2"></div>
<div class="a" style="left:562.55px;top:432.5px;width:30px;text-align:center;font-size:6.93px;line-height:9px;color:#4a4a4a">Sep</div>
<div class="a" style="left:598.60px;top:286.52px;width:18.5px;height:141.08px;background:#c5d7ef"></div>
<div class="a" style="left:598.60px;top:405.77px;width:18.5px;height:21.83px;background:#4f87d2"></div>
<div class="a" style="left:592.85px;top:432.5px;width:30px;text-align:center;font-size:6.93px;line-height:9px;color:#4a4a4a">Oct</div>
<div class="a" style="left:628.90px;top:273.67px;width:18.5px;height:153.93px;background:#c5d7ef"></div>
<div class="a" style="left:628.90px;top:414.74px;width:18.5px;height:12.86px;background:#4f87d2"></div>
<div class="a" style="left:623.15px;top:432.5px;width:30px;text-align:center;font-size:6.93px;line-height:9px;color:#4a4a4a">Nov</div>
<div class="a" style="left:659.20px;top:251.70px;width:18.5px;height:175.90px;background:#c5d7ef"></div>
<div class="a" style="left:659.20px;top:405.63px;width:18.5px;height:21.97px;background:#4f87d2"></div>
<div class="a" style="left:653.45px;top:432.5px;width:30px;text-align:center;font-size:6.93px;line-height:9px;color:#4a4a4a">Dec</div>
<div class="a" style="left:320px;top:427.10px;width:363.6px;height:1px;background:#d9d9d9"></div>
<div class="a" style="left:319.50px;top:427.60px;width:1px;height:2.5px;background:#dedede"></div>
<div class="a" style="left:349.80px;top:427.60px;width:1px;height:2.5px;background:#dedede"></div>
<div class="a" style="left:380.10px;top:427.60px;width:1px;height:2.5px;background:#dedede"></div>
<div class="a" style="left:410.40px;top:427.60px;width:1px;height:2.5px;background:#dedede"></div>
<div class="a" style="left:440.70px;top:427.60px;width:1px;height:2.5px;background:#dedede"></div>
<div class="a" style="left:471.00px;top:427.60px;width:1px;height:2.5px;background:#dedede"></div>
<div class="a" style="left:501.30px;top:427.60px;width:1px;height:2.5px;background:#dedede"></div>
<div class="a" style="left:531.60px;top:427.60px;width:1px;height:2.5px;background:#dedede"></div>
<div class="a" style="left:561.90px;top:427.60px;width:1px;height:2.5px;background:#dedede"></div>
<div class="a" style="left:592.20px;top:427.60px;width:1px;height:2.5px;background:#dedede"></div>
<div class="a" style="left:622.50px;top:427.60px;width:1px;height:2.5px;background:#dedede"></div>
<div class="a" style="left:652.80px;top:427.60px;width:1px;height:2.5px;background:#dedede"></div>
<div class="a" style="left:683.10px;top:427.60px;width:1px;height:2.5px;background:#dedede"></div>
<div class="a" style="left:577.2px;top:188.3px;width:3.5px;height:3.6px;background:#4f87d2"></div>
<div class="a" style="left:582.8px;top:185.6px;font-size:7.05px;line-height:9px;color:#4a4a4a">Monthly Forecast</div>
<div class="a" style="left:646.1px;top:188.3px;width:3.5px;height:3.6px;background:#c5d7ef"></div>
<div class="a" style="left:651.6px;top:185.6px;font-size:7.05px;line-height:9px;color:#4a4a4a">Cumulative</div>



<!-- vertical scrollbar -->
<div class="a" style="left:746.5px;top:128px;width:12px;height:350px;background:#dcdcdc;border-left:1px solid #d0d0d0"></div>
<div class="a" style="left:748.2px;top:129.8px;width:9.6px;height:9.6px;background:#fff;border:1px solid #d0d0d0"></div>
<svg class="a" style="left:750.5px;top:133.5px" width="5" height="3"><path d="M0 3 L2.5 0 L5 3z" fill="#333"/></svg>
<div class="a" style="left:748.2px;top:182.4px;width:9.6px;height:256.8px;background:#fff;border:1px solid #c8c8c8"></div>
<div class="a" style="left:748.2px;top:467.5px;width:9.6px;height:10.2px;background:#fff;border:1px solid #d0d0d0"></div>
<svg class="a" style="left:750.5px;top:471.2px" width="5" height="3"><path d="M0 0 L2.5 3 L5 0z" fill="#333"/></svg>

<!-- sheet tab bar -->
<div class="a" style="left:1px;top:477.5px;width:758px;height:14px;background:#e6e6e6;border-top:1.3px solid #d2d2d2;border-bottom:1.3px solid #d6d6d6"></div>
<svg class="a" style="left:10.5px;top:482px" width="4" height="6"><path d="M3.5 0.5 L0.8 3 L3.5 5.5" stroke="#bdbdbd" fill="none" stroke-width="1"/></svg>
<svg class="a" style="left:24px;top:482px" width="4" height="6"><path d="M0.5 0.5 L3.2 3 L0.5 5.5" stroke="#bdbdbd" fill="none" stroke-width="1"/></svg>
<div class="a" style="left:46px;top:478.8px;width:1.2px;height:11.8px;background:#c6c6c6"></div>
<div class="a" style="left:47.2px;top:478.8px;width:65.6px;height:11.8px;background:#ececec"></div>
<div class="a" style="left:52.6px;top:479px;font-size:8.3px;line-height:10px;color:#333">Forecast Input</div>
<div class="a" style="left:112.8px;top:477.5px;width:64.2px;height:13px;background:#fff;border-bottom:1.3px solid #217346;border-left:1px solid #d0d0d0;border-right:1px solid #d0d0d0"></div>
<div class="a" style="left:116.6px;top:478.8px;font-size:8.7px;line-height:10px;font-weight:bold;color:#1d6b3f;transform:scaleX(0.92);transform-origin:0 0">Sales Forecast</div>
<div class="a" style="left:177px;top:478.8px;width:25.6px;height:11.8px;background:#ececec;border-right:1px solid #cfcfcf"></div>
<div class="a" style="left:181.5px;top:479px;font-size:8.3px;line-height:10px;color:#333">Lists</div>
<svg class="a" style="left:218px;top:479.5px" width="11" height="11"><circle cx="5.5" cy="5.5" r="4.6" fill="none" stroke="#666" stroke-width="1"/><path d="M5.5 3v5M3 5.5h5" stroke="#555" stroke-width="1.2"/></svg>
<!-- h scrollbar -->
<div class="a" style="left:454.5px;top:481.5px;width:1.2px;height:1px;background:#999;box-shadow:0 2.6px 0 #999,0 5.2px 0 #999"></div>
<div class="a" style="left:462.4px;top:479.6px;width:285px;height:10px;background:#e0e0e0"></div>
<div class="a" style="left:462.4px;top:479.6px;width:9.8px;height:10px;background:#fff;border:1px solid #d0d0d0"></div>
<svg class="a" style="left:465.8px;top:482.2px" width="3" height="5"><path d="M3 0 L0 2.5 L3 5z" fill="#333"/></svg>
<div class="a" style="left:472.5px;top:479.6px;width:219.5px;height:10px;background:#fff;border:1px solid #c8c8c8;border-left:1.5px solid #b8b8b8"></div>
<div class="a" style="left:737.6px;top:479.6px;width:9.6px;height:10px;background:#fff;border:1px solid #d0d0d0"></div>
<svg class="a" style="left:741px;top:482.2px" width="3" height="5"><path d="M0 0 L3 2.5 L0 5z" fill="#333"/></svg>

<!-- status bar -->
<div class="a" style="left:1px;top:491.5px;width:758px;height:13px;background:#f0f0f0"></div>
<div class="a" style="left:153.6px;top:494px;font-size:8.3px;line-height:10px;color:#bdbdbd">This is an .XLTM file open in Microsoft Excel 365. &copy; FileInfo.com</div>
<div class="a" style="left:565.5px;top:491.5px;width:24px;height:13px;background:#d4d4d4"></div>
<svg class="a" style="left:572px;top:493.5px" width="10" height="9"><rect x="0.5" y="0.5" width="9" height="8" rx="1" fill="none" stroke="#444" stroke-width="1"/><path d="M3.5 0.5v8M6.5 0.5v8M0.5 3.2h9M0.5 5.8h9" stroke="#444" stroke-width="0.8"/></svg>
<svg class="a" style="left:597px;top:493.5px" width="10" height="9"><rect x="0.5" y="0.5" width="9" height="8" rx="1" fill="none" stroke="#555" stroke-width="0.9"/><path d="M3 0.5v8M7 0.5v8" stroke="#555" stroke-width="0.8"/></svg>
<svg class="a" style="left:623px;top:494px" width="10" height="9"><path d="M0.5 0.5v8h9v-8" fill="none" stroke="#555" stroke-width="0.9"/><path d="M3 0.5v4h4v-4" fill="none" stroke="#555" stroke-width="0.8"/></svg>
<div class="a" style="left:644px;top:497.5px;width:4px;height:1px;background:#888"></div>
<div class="a" style="left:652.6px;top:497.5px;width:62.4px;height:1px;background:#aaa"></div>
<div class="a" style="left:682.5px;top:495px;width:2.8px;height:7.5px;background:#555"></div>
<svg class="a" style="left:719px;top:494.5px" width="6" height="6"><path d="M3 0v6M0 3h6" stroke="#888" stroke-width="1"/></svg>
<div class="a" style="left:732px;top:494.5px;font-size:7.0px;line-height:10px;color:#444">100%</div>

<!-- borders -->
<div class="a" style="left:0;top:21px;width:760px;height:1px;background:#1d6a3e"></div>
<div class="a" style="left:1px;top:22px;width:758px;height:1px;background:#fbfbfb"></div>
<div class="a" style="left:1px;top:22px;width:1px;height:483px;background:#fbfbfb"></div>
<div class="a" style="left:758px;top:22px;width:1px;height:483px;background:#fbfbfb"></div>
<div class="a" style="left:1px;top:504px;width:758px;height:1px;background:#fbfbfb"></div>
<div class="a" style="left:0;top:22px;width:1px;height:484px;background:#3e8a5f"></div>
<div class="a" style="left:759px;top:22px;width:1px;height:484px;background:#3e8a5f"></div>
<div class="a" style="left:0;top:504.6px;width:760px;height:1.4px;background:#3e8a5f"></div>
</body></html>
